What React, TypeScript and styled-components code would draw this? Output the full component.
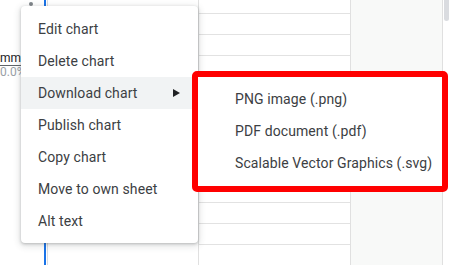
import styled, { createGlobalStyle } from "styled-components";

const GlobalStyle = createGlobalStyle`
  html, body {
    margin: 0;
    padding: 0;
    background: #ffffff;
  }
  body {
    font-family: Roboto, "Liberation Sans", Arial, sans-serif;
  }
`;

const Sheet = styled.div`
  position: relative;
  width: 450px;
  height: 265px;
  overflow: hidden;
  display: flex;
  background: #ffffff;
`;

const LeftStrip = styled.div`
  width: 44px;
  flex-shrink: 0;
  position: relative;
  padding-top: 52px;
  box-sizing: border-box;
  font-size: 12px;
  line-height: 13px;
`;

const CellText = styled.div<{ $muted?: boolean }>`
  color: ${({ $muted }) => ($muted ? "#9aa0a6" : "#202124")};
  white-space: nowrap;
  ${({ $muted }) => (!$muted ? "border-bottom: 1px solid #5f6368; width: 22px;" : "")}
`;

const HandleDot = styled.div`
  position: absolute;
  left: 29px;
  top: 2px;
  width: 4px;
  height: 4px;
  border-radius: 50%;
  background: #80868b;
`;

const ChartFrame = styled.div`
  width: 154px;
  flex-shrink: 0;
  border-left: 2px solid #1a73e8;
  box-sizing: border-box;
  display: flex;
`;

const ChartInner = styled.div`
  margin-left: 1px;
  border-left: 1px solid #dadce0;
  flex: 1;
`;

const GridColumn = styled.div`
  width: 151px;
  flex-shrink: 0;
  border-left: 1px solid #e0e0e0;
  background-image: repeating-linear-gradient(
    to bottom,
    transparent 0,
    transparent 13px,
    #e2e2e2 13px,
    #e2e2e2 14px,
    transparent 14px,
    transparent 21px
  );
  background-size: 100% 21px;
  background-position: 0 0;
`;

const SidePanel = styled.div`
  width: 93px;
  flex-shrink: 0;
  background: #f8f9f8;
  border-left: 1px solid #e0e0e0;
  border-right: 1px solid #e0e0e0;
  box-sizing: border-box;
`;

const ScrollTrack = styled.div`
  flex: 1;
  padding: 0 1px;
  background: #ffffff;
`;

const ScrollThumb = styled.div`
  height: 21px;
  border-radius: 0 0 3px 3px;
  background: #dadce0;
`;

const Menu = styled.div<{ $left: number; $top: number; $width: number }>`
  position: absolute;
  left: ${({ $left }) => $left}px;
  top: ${({ $top }) => $top}px;
  width: ${({ $width }) => $width}px;
  padding: 7px 0 6px;
  box-sizing: border-box;
  background: #ffffff;
  border-radius: 4px;
  box-shadow: 0 1px 3px rgba(60, 64, 67, 0.3), 0 2px 6px 2px rgba(60, 64, 67, 0.12);
`;

const Item = styled.div<{ $active?: boolean }>`
  position: relative;
  height: 32px;
  display: flex;
  align-items: center;
  padding-left: 17px;
  font-size: 14px;
  letter-spacing: 0.1px;
  color: #3c4043;
  background: ${({ $active }) => ($active ? "#f1f3f4" : "transparent")};
  white-space: nowrap;
`;

const Arrow = styled.span`
  position: absolute;
  right: 18px;
  top: 50%;
  transform: translateY(-50%);
  width: 0;
  height: 0;
  border-top: 4px solid transparent;
  border-bottom: 4px solid transparent;
  border-left: 7px solid #202124;
`;

const SubMenu = styled(Menu)`
  padding: 6px 0 7px;
  border-radius: 5px;
  box-shadow: none;
  border: 6px solid #ff0000;
`;

const SubItem = styled(Item)`
  padding-left: 37px;
`;

const mainItems = [
  "Edit chart",
  "Delete chart",
  "Download chart",
  "Publish chart",
  "Copy chart",
  "Move to own sheet",
  "Alt text",
];

const downloadItems = [
  "PNG image (.png)",
  "PDF document (.pdf)",
  "Scalable Vector Graphics (.svg)",
];

export default function App() {
  return (
    <>
      <GlobalStyle />
      <Sheet>
        <LeftStrip>
          <HandleDot />
          <CellText>mme</CellText>
          <CellText $muted>0.0%</CellText>
        </LeftStrip>
        <ChartFrame>
          <ChartInner />
        </ChartFrame>
        <GridColumn />
        <SidePanel />
        <ScrollTrack>
          <ScrollThumb />
        </ScrollTrack>

        <Menu $left={21} $top={6} $width={177}>
          {mainItems.map((label) => (
            <Item key={label} $active={label === "Download chart"}>
              {label}
              {label === "Download chart" && <Arrow />}
            </Item>
          ))}
        </Menu>

        <SubMenu $left={192} $top={71} $width={256}>
          {downloadItems.map((label) => (
            <SubItem key={label}>{label}</SubItem>
          ))}
        </SubMenu>
      </Sheet>
    </>
  );
}
